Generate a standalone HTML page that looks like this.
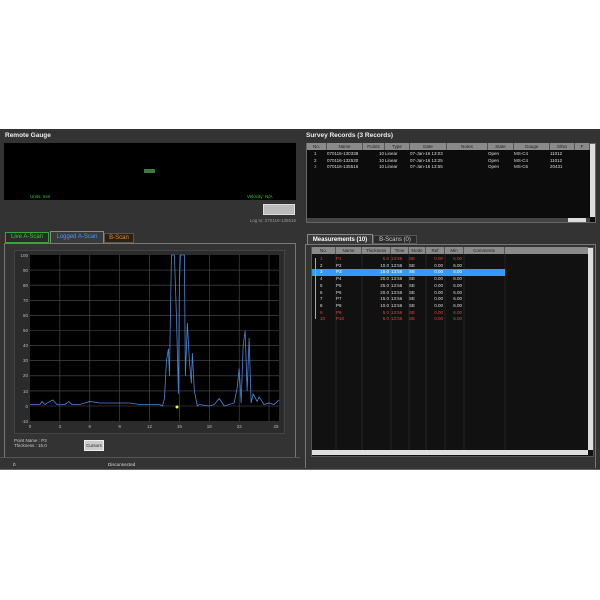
<!DOCTYPE html>
<html><head><meta charset="utf-8"><style>
*{margin:0;padding:0;box-sizing:border-box}
body{width:600px;height:600px;background:#fff;position:relative;overflow:hidden;font-family:"Liberation Sans",sans-serif;font-size:5px;color:#ddd}
.a{position:absolute}
.t{font-weight:bold;font-size:6.5px;color:#eee}
.hdr{position:absolute;height:7px;background:#8a8a8a;display:flex}
.hdr div{border-right:1px solid #555;color:#222;font-size:4.5px;text-align:center;line-height:7px}
.row{position:absolute;height:6.7px;font-size:4.5px;line-height:6.7px;display:flex;color:#ddd}
.row div{white-space:nowrap;overflow:hidden}
.red div{color:#d44}
.sel{background:#3399ff}
.sel div{color:#fff}
</style></head><body>
<div class="a" style="left:0;top:129px;width:600px;height:341px;background:#333"></div>
<!-- Left -->
<div class="a t" style="left:5px;top:132px">Remote Gauge</div>
<div class="a" style="left:4px;top:143px;width:292px;height:57px;background:#000"></div>
<div class="a" style="left:144px;top:169px;width:11px;height:4px;background:#3c7a3c"></div>
<div class="a" style="left:30px;top:194px;color:#3c3;font-size:4.5px">Units: mm</div>
<div class="a" style="left:247px;top:194px;color:#3c3;font-size:4.5px">Velocity: N/A</div>
<div class="a" style="left:263px;top:204px;width:32px;height:11px;background:#bbb;border:1px solid #ddd"></div>
<div class="a" style="left:230px;top:218px;width:66px;text-align:right;color:#999;font-size:4.5px">Log to: 070116-135516</div>
<div class="a" style="left:5px;top:232px;width:44px;height:11px;border:1px solid #3a3;background:#2a2a2a;color:#3c3;font-size:6px;line-height:9px;text-align:center">Live A-Scan</div>
<div class="a" style="left:50px;top:231px;width:54px;height:12px;border:1px solid #888;border-bottom:none;background:#3a3a3a;color:#49f;font-size:6px;line-height:10px;text-align:center">Logged A-Scan</div>
<div class="a" style="left:104px;top:233px;width:30px;height:10px;border:1px solid #555;background:#2a2210;color:#d84;font-size:6px;line-height:8px;text-align:center">B-Scan</div>
<div class="a" style="left:4px;top:243px;width:292px;height:214px;border:1px solid #777;border-bottom:none"></div>
<div class="a" style="left:14px;top:250px;width:271px;height:184px;background:#2b2b2b;border:1px solid #444"></div>
<svg class="a" style="left:0;top:0" width="600" height="600">
<rect x="30" y="255" width="249" height="166" fill="#000"/>
<g stroke="#505050" stroke-width="0.6">
<line x1="59.9" y1="255" x2="59.9" y2="421"/><line x1="89.8" y1="255" x2="89.8" y2="421"/><line x1="119.6" y1="255" x2="119.6" y2="421"/><line x1="149.5" y1="255" x2="149.5" y2="421"/><line x1="179.4" y1="255" x2="179.4" y2="421"/><line x1="209.3" y1="255" x2="209.3" y2="421"/><line x1="239.2" y1="255" x2="239.2" y2="421"/><line x1="269" y1="255" x2="269" y2="421"/>
<line x1="30" y1="270.1" x2="279" y2="270.1"/><line x1="30" y1="285.2" x2="279" y2="285.2"/><line x1="30" y1="300.3" x2="279" y2="300.3"/><line x1="30" y1="315.4" x2="279" y2="315.4"/><line x1="30" y1="330.5" x2="279" y2="330.5"/><line x1="30" y1="345.6" x2="279" y2="345.6"/><line x1="30" y1="360.7" x2="279" y2="360.7"/><line x1="30" y1="375.8" x2="279" y2="375.8"/><line x1="30" y1="390.9" x2="279" y2="390.9"/><line x1="30" y1="406" x2="279" y2="406"/>
</g>
<g fill="#bbb" font-size="4.5" font-family="Liberation Sans" text-anchor="end">
<text x="28" y="257">100</text><text x="28" y="272">90</text><text x="28" y="287">80</text><text x="28" y="302">70</text><text x="28" y="317">60</text><text x="28" y="332">50</text><text x="28" y="347">40</text><text x="28" y="362">30</text><text x="28" y="377">20</text><text x="28" y="393">10</text><text x="28" y="408">0</text><text x="28" y="423">-10</text>
</g>
<g fill="#bbb" font-size="4.5" font-family="Liberation Sans" text-anchor="middle">
<text x="30" y="428">0</text><text x="59.9" y="428">3</text><text x="89.8" y="428">6</text><text x="119.6" y="428">9</text><text x="149.5" y="428">12</text><text x="179.4" y="428">15</text><text x="209.3" y="428">18</text><text x="239.2" y="428">22</text><text x="276" y="428">25</text>
</g>
<g transform="translate(30,406) scale(9.96,-1.51)">
<polyline fill="none" stroke="#4a86d8" stroke-width="0.8" vector-effect="non-scaling-stroke" points="0,1 1,1 1.2,3 1.5,1 2,3 2.3,4 2.7,1 3.5,1 3.9,3 4.2,1 5,1 5.5,2 6,3 7,2 8,2 9,2 10,2 11,1 12,1 13,1 13.3,0 13.5,5 13.7,30 13.9,38 14,20 14.2,100 14.5,100 14.7,60 14.9,8 15,80 15.1,100 15.5,100 15.6,20 15.8,55 16,30 16.2,15 16.3,35 16.5,10 16.8,0 17,1 18,0 18.5,1 19,5 19.5,0 20,1 20.5,2 20.8,12 21,25 21.2,2 21.4,40 21.6,50 21.8,10 22,45 22.2,2 22.4,8 22.8,3 23,6 23.5,1 24,2 24.5,1 25,4"/>
</g>
<circle cx="177" cy="407" r="1.5" fill="#ff0"/>
</svg>
<div class="a" style="left:14px;top:438px;font-size:4.5px;color:#ccc;line-height:5px">Point Name : P3<br>Thickness : 15.0</div>
<div class="a" style="left:84px;top:440px;width:20px;height:11px;background:#ccc;border:1px solid #eee;color:#222;font-size:4.5px;line-height:9px;text-align:center">Cursors</div>
<div class="a" style="left:0;top:457px;width:300px;height:1px;background:#555"></div>
<div class="a" style="left:13px;top:462px;font-size:4.5px">0</div>
<div class="a" style="left:108px;top:462px;font-size:4.5px">Disconnected</div>
<!-- Right -->
<div class="a t" style="left:306px;top:132px">Survey Records (3 Records)</div>
<div class="a" style="left:306px;top:143px;width:290px;height:80px;background:#0c0c0c;border:1px solid #666"></div>
<div class="hdr" style="left:307px;top:143px;width:283px">
<div style="width:20px">No.</div><div style="width:36px">Name</div><div style="width:22px">Points</div><div style="width:25px">Type</div><div style="width:37px">Date</div><div style="width:41px">Notes</div><div style="width:26px">State</div><div style="width:36px">Gauge</div><div style="width:25px">S/No</div><div style="width:15px">F</div></div>
<div class="row" style="left:307px;top:151px"><div style="width:20px;padding-left:7px">1</div><div style="width:36px">070116-130338</div><div style="width:22px;text-align:right;padding-right:1px">10</div><div style="width:25px">Linear</div><div style="width:37px">07-Jan-16 13:03</div><div style="width:41px"></div><div style="width:26px">Open</div><div style="width:36px">MS-C4</div><div style="width:25px">11012</div></div>
<div class="row" style="left:307px;top:157.5px"><div style="width:20px;padding-left:7px">2</div><div style="width:36px">070116-132530</div><div style="width:22px;text-align:right;padding-right:1px">10</div><div style="width:25px">Linear</div><div style="width:37px">07-Jan-16 13:25</div><div style="width:41px"></div><div style="width:26px">Open</div><div style="width:36px">MS-C4</div><div style="width:25px">11012</div></div>
<div class="row" style="left:307px;top:164px"><div style="width:20px;padding-left:7px;color:#49f">3</div><div style="width:36px">070116-135516</div><div style="width:22px;text-align:right;padding-right:1px">10</div><div style="width:25px">Linear</div><div style="width:37px">07-Jan-16 13:55</div><div style="width:41px"></div><div style="width:26px">Open</div><div style="width:36px">MS-C6</div><div style="width:25px">20431</div></div>
<div class="a" style="left:590px;top:144px;width:5px;height:73px;background:#ddd"></div>
<div class="a" style="left:307px;top:218px;width:283px;height:4px;background:#444"></div>
<div class="a" style="left:568px;top:218px;width:18px;height:4px;background:#ddd"></div>
<div class="a" style="left:307px;top:234px;width:66px;height:11px;border:1px solid #888;border-bottom:none;background:#3a3a3a;color:#fff;font-weight:bold;font-size:6px;line-height:10px;text-align:center">Measurements (10)</div>
<div class="a" style="left:373px;top:235px;width:44px;height:9px;border:1px solid #555;background:#2a2a2a;color:#ccc;font-size:6px;line-height:8px;text-align:center">B-Scans (0)</div>
<div class="a" style="left:305px;top:244px;width:291px;height:224px;border:1px solid #777;border-bottom:none"></div>
<div class="a" style="left:311px;top:247px;width:283px;height:210px;background:#111;border:1px solid #555"></div>
<svg class="a" style="left:0;top:0" width="600" height="600"><g stroke="#2a2a2a" stroke-width="0.8">
<line x1="336" y1="254" x2="336" y2="450"/><line x1="362" y1="254" x2="362" y2="450"/><line x1="391" y1="254" x2="391" y2="450"/><line x1="409" y1="254" x2="409" y2="450"/><line x1="426" y1="254" x2="426" y2="450"/><line x1="445" y1="254" x2="445" y2="450"/><line x1="464" y1="254" x2="464" y2="450"/><line x1="505" y1="254" x2="505" y2="450"/></g></svg>
<div class="hdr" style="left:312px;top:247px;width:276px">
<div style="width:24px">No.</div><div style="width:26px">Name</div><div style="width:29px">Thickness</div><div style="width:18px">Time</div><div style="width:17px">Mode</div><div style="width:19px">Ref</div><div style="width:19px">Min</div><div style="width:41px">Comments</div><div style="flex:1;border:none"></div></div>
<div class="a" style="left:588px;top:248px;width:5px;height:202px;background:#ddd"></div>
<div class="a" style="left:312px;top:450px;width:276px;height:5px;background:#ddd"></div>
<div id="m"></div>
<div class="row red" style="left:312px;top:256px"><div style="width:24px;padding-left:8px">1</div><div style="width:26px">P1</div><div style="width:29px;text-align:right;padding-right:2px">5.0</div><div style="width:18px">13:55</div><div style="width:17px">SE</div><div style="width:19px;text-align:right;padding-right:2px">0.00</div><div style="width:19px;text-align:right;padding-right:2px">6.00</div></div>
<div class="row" style="left:312px;top:262.7px"><div style="width:24px;padding-left:8px">2</div><div style="width:26px">P2</div><div style="width:29px;text-align:right;padding-right:2px">10.0</div><div style="width:18px">13:56</div><div style="width:17px">SE</div><div style="width:19px;text-align:right;padding-right:2px">0.00</div><div style="width:19px;text-align:right;padding-right:2px">6.00</div></div>
<div class="row sel" style="left:312px;top:269.4px;width:193px"><div style="width:24px;padding-left:8px">3</div><div style="width:26px">P3</div><div style="width:29px;text-align:right;padding-right:2px">15.0</div><div style="width:18px">13:56</div><div style="width:17px">SE</div><div style="width:19px;text-align:right;padding-right:2px">0.00</div><div style="width:19px;text-align:right;padding-right:2px">6.00</div></div>
<div class="row" style="left:312px;top:276.1px"><div style="width:24px;padding-left:8px">4</div><div style="width:26px">P4</div><div style="width:29px;text-align:right;padding-right:2px">20.0</div><div style="width:18px">13:56</div><div style="width:17px">SE</div><div style="width:19px;text-align:right;padding-right:2px">0.00</div><div style="width:19px;text-align:right;padding-right:2px">6.00</div></div>
<div class="row" style="left:312px;top:282.8px"><div style="width:24px;padding-left:8px">5</div><div style="width:26px">P5</div><div style="width:29px;text-align:right;padding-right:2px">25.0</div><div style="width:18px">13:56</div><div style="width:17px">SE</div><div style="width:19px;text-align:right;padding-right:2px">0.00</div><div style="width:19px;text-align:right;padding-right:2px">6.00</div></div>
<div class="row" style="left:312px;top:289.5px"><div style="width:24px;padding-left:8px">6</div><div style="width:26px">P6</div><div style="width:29px;text-align:right;padding-right:2px">20.0</div><div style="width:18px">13:56</div><div style="width:17px">SE</div><div style="width:19px;text-align:right;padding-right:2px">0.00</div><div style="width:19px;text-align:right;padding-right:2px">6.00</div></div>
<div class="row" style="left:312px;top:296.2px"><div style="width:24px;padding-left:8px">7</div><div style="width:26px">P7</div><div style="width:29px;text-align:right;padding-right:2px">15.0</div><div style="width:18px">13:56</div><div style="width:17px">SE</div><div style="width:19px;text-align:right;padding-right:2px">0.00</div><div style="width:19px;text-align:right;padding-right:2px">6.00</div></div>
<div class="row" style="left:312px;top:302.9px"><div style="width:24px;padding-left:8px">8</div><div style="width:26px">P8</div><div style="width:29px;text-align:right;padding-right:2px">10.0</div><div style="width:18px">13:56</div><div style="width:17px">SE</div><div style="width:19px;text-align:right;padding-right:2px">0.00</div><div style="width:19px;text-align:right;padding-right:2px">6.00</div></div>
<div class="row red" style="left:312px;top:309.6px"><div style="width:24px;padding-left:8px">9</div><div style="width:26px">P9</div><div style="width:29px;text-align:right;padding-right:2px">5.0</div><div style="width:18px">13:56</div><div style="width:17px">SE</div><div style="width:19px;text-align:right;padding-right:2px">0.00</div><div style="width:19px;text-align:right;padding-right:2px">6.00</div></div>
<div class="row red" style="left:312px;top:316.3px"><div style="width:24px;padding-left:8px">10</div><div style="width:26px">P10</div><div style="width:29px;text-align:right;padding-right:2px">5.0</div><div style="width:18px">13:56</div><div style="width:17px">SE</div><div style="width:19px;text-align:right;padding-right:2px">0.00</div><div style="width:19px;text-align:right;padding-right:2px">6.00</div></div>
<div class="a" style="left:315px;top:258px;width:1px;height:61px;background:#aaa"></div>
<div class="a" style="left:0;top:469px;width:600px;height:1px;background:#666"></div>
</body></html>
